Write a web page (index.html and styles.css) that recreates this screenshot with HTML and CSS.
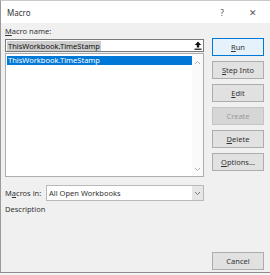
FILE: index.html
```
<!DOCTYPE html>
<html>
<head>
<meta charset="utf-8">
<link rel="stylesheet" href="styles.css">
</head>
<body>
<div class="window">
  <div class="titlebar">
    <span class="title">Macro</span>
    <span class="tb-icons"><span class="help">?</span><span class="close">✕</span></span>
  </div>
  <div class="content">
    <div class="left">
      <div class="label"><u>M</u>acro name:</div>
      <div class="input">
        <span class="sel">ThisWorkbook.TimeStamp</span>
        <span class="upbtn">
          <svg width="8" height="9" viewBox="0 0 8 9"><path d="M4 0.5 L7.2 4 H5.2 V6.5 H2.8 V4 H0.8 Z" fill="#111"/><rect x="0.5" y="7.6" width="7" height="1.2" fill="#111"/></svg>
        </span>
      </div>
      <div class="list">
        <div class="items">
          <div class="item selected">ThisWorkbook.TimeStamp</div>
        </div>
        <div class="scroll">
          <svg width="7" height="5" viewBox="0 0 7 5"><path d="M1 4 L3.5 1.5 L6 4" fill="none" stroke="#b0b0b0" stroke-width="1"/></svg>
          <svg width="7" height="5" viewBox="0 0 7 5"><path d="M1 1 L3.5 3.5 L6 1" fill="none" stroke="#b0b0b0" stroke-width="1"/></svg>
        </div>
      </div>
      <div class="row">
        <span class="label inl">M<u>a</u>cros in:</span>
        <div class="combo">
          <span class="combo-text">All Open Workbooks</span>
          <span class="drop"><svg width="7" height="5" viewBox="0 0 7 5"><path d="M1 1 L3.5 3.5 L6 1" fill="none" stroke="#777" stroke-width="1"/></svg></span>
        </div>
      </div>
      <div class="label desc">Description</div>
    </div>
    <div class="right">
      <div class="btn default"><u>R</u>un</div>
      <div class="btn"><u>S</u>tep Into</div>
      <div class="btn"><u>E</u>dit</div>
      <div class="btn disabled">Create</div>
      <div class="btn"><u>D</u>elete</div>
      <div class="btn"><u>O</u>ptions...</div>
      <div class="spacer"></div>
      <div class="btn">Cancel</div>
    </div>
  </div>
</div>
</body>
</html>
```
FILE: styles.css
```
* { box-sizing: border-box; }
html, body { margin: 0; padding: 0; }
body {
  width: 270px;
  height: 275px;
  background: #f4f4f4;
  font-family: "Noto Sans", "Open Sans", sans-serif;
  font-size: 7.5px;
  color: #333;
  overflow: hidden;
}
.window {
  width: 270px;
  height: 273px;
  border-left: 1px solid #9a9a9a;
  border-top: 1px solid #c9c9c9;
  border-bottom: 1px solid #8c8c8c;
  display: flex;
  flex-direction: column;
}
.titlebar {
  height: 22px;
  background: #fff;
  display: flex;
  align-items: center;
  justify-content: space-between;
  padding-left: 6px;
  padding-right: 13px;
}
.title { font-size: 8px; color: #333; }
.tb-icons { display: flex; gap: 25px; align-items: center; color: #555; }
.help { font-size: 8.5px; }
.close { font-size: 9px; font-weight: 300; }
.content {
  flex: 1;
  background: #f0f0f0;
  display: flex;
  padding-left: 4px;
}
.left {
  width: 199px;
  display: flex;
  flex-direction: column;
}
.label { line-height: 11px; margin-top: 3px; white-space: nowrap; }
.input {
  margin-top: 2px;
  height: 13px;
  background: #fff;
  border: 1px solid #7a7a7a;
  display: flex;
  align-items: center;
  justify-content: space-between;
  padding-left: 1px;
}
.sel {
  background: #cccccc;
  line-height: 10px;
  color: #111;
  padding: 0 1px;
}
.upbtn {
  width: 11px;
  height: 11px;
  display: flex;
  align-items: center;
  justify-content: center;
}
.list {
  margin-top: 1px;
  height: 124px;
  background: #fff;
  border: 1px solid #abadb3;
  display: flex;
}
.items { flex: 1; padding: 2px 0 0 1px; }
.item { line-height: 9px; height: 9px; padding-left: 1px; white-space: nowrap; }
.item.selected { background: #0078d7; color: #fff; }
.scroll {
  width: 11px;
  background: #fafafa;
  display: flex;
  flex-direction: column;
  justify-content: space-between;
  align-items: center;
  padding: 6px 0 4px;
}
.row {
  margin-top: 8px;
  display: flex;
  align-items: center;
  height: 16px;
}
.label.inl { margin-top: 0; width: 41px; }
.combo {
  flex: 1;
  height: 16px;
  background: #fff;
  border: 1px solid #b9b9b9;
  display: flex;
  align-items: center;
  justify-content: space-between;
  padding-left: 2px;
}
.drop {
  width: 11px;
  height: 14px;
  background: #e6e6e6;
  display: flex;
  align-items: center;
  justify-content: center;
}
.desc { margin-top: 3px; }
.right {
  margin-left: 8px;
  width: 52px;
  display: flex;
  flex-direction: column;
  gap: 5px;
  padding-top: 15px;
  padding-bottom: 2px;
}
.spacer { flex: 1; }
.btn {
  height: 18px;
  background: #e1e1e1;
  border: 1px solid #adadad;
  display: flex;
  align-items: center;
  justify-content: center;
  color: #333;
  white-space: nowrap;
}
.btn.default { border-color: #0078d7; background: #e5f1fb; }
.btn.disabled { background: #d6d6d6; border-color: #c4c4c4; color: #9a9a9a; }
```
